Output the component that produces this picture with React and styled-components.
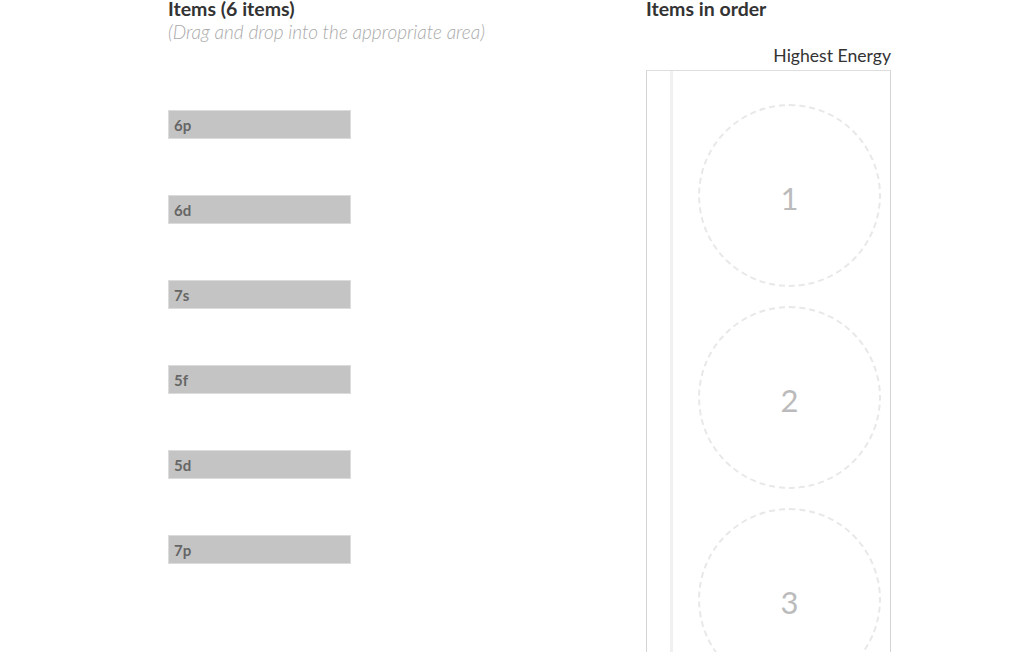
import React from "react";
import styled, { createGlobalStyle } from "styled-components";

const Global = createGlobalStyle`
  html, body { margin: 0; padding: 0; background: #fff; overflow: hidden; }
  body { font-family: Lato, "Open Sans", sans-serif; color: #333; }
`;

const Page = styled.div`
  display: grid;
  grid-template-columns: 478px 245px;
  padding-left: 168px;
  height: 652px;
  overflow: hidden;
`;

const Column = styled.div`
  display: flex;
  flex-direction: column;
`;

const Heading = styled.h2`
  margin: 0;
  font-family: Lato, sans-serif;
  font-weight: 700;
  font-size: 19.5px;
  line-height: 18px;
  color: #333;
`;

const Hint = styled.div`
  margin-top: 3px;
  font-family: Lato, sans-serif;
  font-style: italic;
  font-weight: 300;
  font-size: 19px;
  line-height: 22px;
  color: #aaa;
`;

const ItemList = styled.div`
  display: flex;
  flex-direction: column;
  gap: 56px;
  margin-top: 67px;
`;

const Item = styled.div`
  width: 181px;
  height: 27px;
  background: #c4c4c4;
  border: 1px solid #dcdcdc;
  box-sizing: content-box;
  display: flex;
  align-items: center;
  font-family: Lato, sans-serif;
  font-weight: 700;
  font-size: 15px;
  color: #666;
  & > span { padding-left: 5px; padding-top: 1px; }
`;

const EndLabel = styled.div`
  margin-top: 28px;
  text-align: right;
  font-family: Lato, sans-serif;
  font-size: 17.6px;
  line-height: 20px;
  color: #333;
`;

const Box = styled.div`
  margin-top: 4px;
  border: 1px solid #d4d4d4;
  border-top-color: #dedede;
  border-bottom: none;
  display: flex;
  flex: 1;
`;

const Rail = styled.div`
  width: 23px;
  border-right: 3px solid #f0f0f0;
  flex: none;
`;

const Slots = styled.div`
  flex: 1;
  display: flex;
  flex-direction: column;
  align-items: center;
  gap: 19px;
  padding: 33px 9px 0 25px;
`;

const Slot = styled.div`
  width: 183px;
  height: 183px;
  flex: none;
  box-sizing: border-box;
  border-radius: 50%;
  border: 2px dashed #e8e8e8;
  display: flex;
  align-items: center;
  justify-content: center;
  padding-top: 4px;
  font-family: Lato, sans-serif;
  font-size: 31px;
  color: #bbb;
`;

const items = ["6p", "6d", "7s", "5f", "5d", "7p"];

export default function App() {
  return (
    <>
      <Global />
      <Page>
        <Column>
          <Heading>Items (6 items)</Heading>
          <Hint>(Drag and drop into the appropriate area)</Hint>
          <ItemList>
            {items.map((t) => (
              <Item key={t}>
                <span>{t}</span>
              </Item>
            ))}
          </ItemList>
        </Column>
        <Column>
          <Heading>Items in order</Heading>
          <EndLabel>Highest Energy</EndLabel>
          <Box>
            <Rail />
            <Slots>
              {[1, 2, 3, 4, 5, 6].map((n) => (
                <Slot key={n}>{n}</Slot>
              ))}
            </Slots>
          </Box>
        </Column>
      </Page>
    </>
  );
}
